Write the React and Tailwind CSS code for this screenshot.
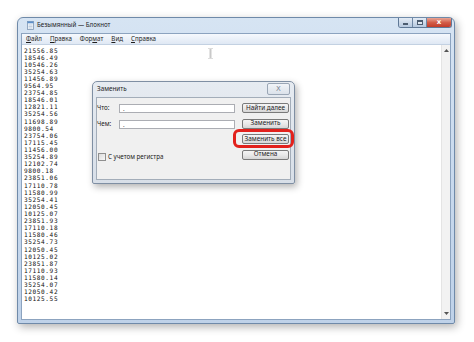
import React from "react";

const lines = [
  "21556.85", "18546.49", "10546.26", "35254.63", "11456.89", "9564.95",
  "23754.85", "18546.01", "12821.11", "35254.56", "11698.89", "9800.54",
  "23754.06", "17115.45", "11456.00", "35254.89", "12102.74", "9800.18",
  "23851.06", "17110.78", "11580.99", "35254.41", "12050.45", "10125.07",
  "23851.93", "17110.18", "11580.46", "35254.73", "12050.45", "10125.02",
  "23851.87", "17110.93", "11580.14", "35254.07", "12050.42", "10125.55",
];

const ui = { fontFamily: '"Noto Sans", "Open Sans", sans-serif' };

function NotepadIcon() {
  return (
    <svg width="7" height="9" viewBox="0 0 7 9">
      <rect x="0.5" y="0.5" width="6" height="8" fill="#f4f8fc" stroke="#7f97b3" strokeWidth="0.8" />
      <rect x="0.5" y="0.5" width="6" height="1.8" fill="#5b8ec9" />
      <line x1="1.5" y1="4" x2="5.5" y2="4" stroke="#9fb4cc" strokeWidth="0.6" />
      <line x1="1.5" y1="5.5" x2="5.5" y2="5.5" stroke="#9fb4cc" strokeWidth="0.6" />
      <line x1="1.5" y1="7" x2="5.5" y2="7" stroke="#9fb4cc" strokeWidth="0.6" />
    </svg>
  );
}

function Btn({ children }) {
  return (
    <div className="h-[10px] w-[47px] rounded-[2px] border border-[#7a7a7a] bg-gradient-to-b from-[#f4f4f4] via-[#e9e9e9] to-[#d6d6d6] flex items-center justify-center text-[6.4px] leading-none text-[#1a1a1a]">
      {children}
    </div>
  );
}

export default function App() {
  return (
    <div className="w-[474px] h-[342px] bg-white relative overflow-hidden pl-[17px] pt-[17px]" style={ui}>
      {/* Notepad window */}
      <div className="w-[438px] h-[307px] rounded-t-[6px] rounded-b-[2px] border border-[#6f8aa9] bg-gradient-to-b from-[#d6e4f3] via-[#c9daee] to-[#bfd2e9] flex flex-col shadow-[2px_3px_9px_rgba(0,0,0,0.3)]">
        {/* title bar */}
        <div className="h-[15px] flex items-start shrink-0">
          <div className="flex items-center h-full pl-[9px] gap-[3px]">
            <NotepadIcon />
            <span className="text-[6.2px] leading-none text-[#1c1c1c]">Безымянный — Блокнот</span>
          </div>
          <div className="ml-auto mr-[2px] flex h-[10px] rounded-b-[3px] border border-t-0 border-[#5f7896] overflow-hidden">
            <div className="w-[14px] h-full bg-gradient-to-b from-[#e3ebf5] to-[#b6c8de] border-r border-[#6f87a4] flex items-center justify-center">
              <div className="w-[5px] h-[2px] bg-white border border-[#4c5c70] mt-[3px]" />
            </div>
            <div className="w-[14px] h-full bg-gradient-to-b from-[#e3ebf5] to-[#b6c8de] border-r border-[#6f87a4] flex items-center justify-center">
              <div className="w-[6px] h-[5px] border border-[#4c5c70] border-t-2 bg-white/40" />
            </div>
            <div className="w-[24px] h-full bg-gradient-to-b from-[#e8a596] via-[#d35d49] to-[#c23b28] flex items-center justify-center">
              <span className="text-white text-[7px] font-bold leading-none" style={{ fontFamily: '"DejaVu Sans", sans-serif' }}>x</span>
            </div>
          </div>
        </div>
        {/* client */}
        <div className="flex-1 mx-[3px] mb-[3px] border border-[#8ca3bf] flex flex-col bg-white min-h-0">
          <div className="h-[11px] shrink-0 bg-gradient-to-b from-[#f6f9fd] to-[#dfe8f4] border-b border-[#c3d1e2] flex items-center pl-[4px] gap-[8px] text-[6.2px] leading-none text-[#1e1e1e]">
            <span><u>Ф</u>айл</span>
            <span><u>П</u>равка</span>
            <span>Фор<u>м</u>ат</span>
            <span><u>В</u>ид</span>
            <span><u>С</u>правка</span>
          </div>
          <div className="flex-1 flex min-h-0 relative">
            <div
              className="flex-1 pl-[2px] pt-[1.5px] text-[6.1px] leading-[7.11px] tracking-[0.6px] text-[#111]"
              style={{ fontFamily: '"DejaVu Sans Mono", "Liberation Mono", monospace' }}
            >
              {lines.map((l, i) => (
                <div key={i}>{l}</div>
              ))}
            </div>
            <div className="w-[9px] bg-[#f2f2f2] border-l border-[#e4e4e4] flex flex-col justify-between items-center py-[4px]">
              <svg width="5" height="3" viewBox="0 0 5 3"><polygon points="2.5,0 5,3 0,3" fill="#555" /></svg>
              <svg width="5" height="3" viewBox="0 0 5 3"><polygon points="0,0 5,0 2.5,3" fill="#555" /></svg>
            </div>
            {/* I-beam mouse cursor */}
            <div className="absolute left-[186px] top-[3px]">
              <svg width="5" height="11" viewBox="0 0 5 11">
                <rect x="1.5" y="0" width="2" height="11" fill="#c9c9c9" />
                <rect x="0" y="0" width="5" height="1" fill="#dcdcdc" />
                <rect x="0" y="10" width="5" height="1" fill="#dcdcdc" />
              </svg>
            </div>
          </div>
        </div>
      </div>

      {/* Replace dialog */}
      <div className="absolute left-[92px] top-[81px] w-[203px] h-[103px] rounded-t-[5px] rounded-b-[2px] border border-[#7f8fa3] bg-gradient-to-b from-[#e6ebf1] to-[#d8dfe8] flex flex-col shadow-[2px_3px_7px_rgba(0,0,0,0.3)]">
        <div className="h-[15px] shrink-0 flex items-start">
          <span className="pl-[4px] h-full flex items-center text-[6.3px] leading-none text-[#222]">Заменить</span>
          <div className="ml-auto mr-[4px] mt-[1px] w-[23px] h-[12px] rounded-[2px] border border-[#9aa6b5] bg-gradient-to-b from-[#f1f4f8] to-[#dbe2ea] flex items-center justify-center">
            <span className="text-[7px] leading-none text-[#7b8594]" style={{ fontFamily: '"DejaVu Sans", sans-serif' }}>X</span>
          </div>
        </div>
        <div className="flex-1 mx-[3px] mb-[3px] border border-[#a3adb9] bg-[#f0f0f0] flex pr-[1px]">
          <div className="w-[145px] flex flex-col pt-[6px]">
            <div className="flex items-center h-[9px]">
              <span className="w-[22px] text-[6.3px] leading-none text-[#1a1a1a]">Что:</span>
              <div className="w-[116px] h-[9px] bg-white border border-[#abadb3] flex items-center pl-[3px] text-[6px] leading-none">.</div>
            </div>
            <div className="flex items-center h-[9px] mt-[7px]">
              <span className="w-[22px] text-[6.3px] leading-none text-[#1a1a1a]">Чем:</span>
              <div className="w-[116px] h-[9px] bg-white border border-[#abadb3] flex items-center pl-[3px] text-[6px] leading-none">.</div>
            </div>
            <div className="flex items-center mt-[24px] pl-[1px] gap-[2px]">
              <div className="w-[8px] h-[8px] border border-[#8f8f8f] bg-gradient-to-br from-[#dcdcdc] to-[#f7f7f7]" />
              <span className="text-[6.2px] leading-none text-[#1a1a1a]">С учетом регистра</span>
            </div>
          </div>
          <div className="w-[47px] ml-auto flex flex-col pt-[5px] gap-[5.5px]">
            <Btn>Найти далее</Btn>
            <Btn>Заменить</Btn>
            <Btn>Заменить все</Btn>
            <Btn>Отмена</Btn>
          </div>
        </div>
      </div>

      {/* red highlight */}
      <div className="absolute left-[233px] top-[129px] w-[61px] h-[19px] rounded-[6px] border-[3px] border-[#e2211c]" />
    </div>
  );
}
